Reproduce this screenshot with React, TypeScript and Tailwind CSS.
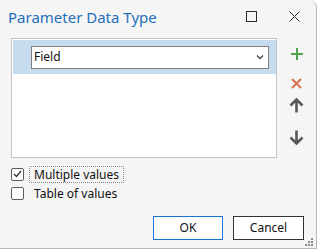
import React from "react";

const font = { fontFamily: '"Segoe UI", "Noto Sans", "Open Sans", sans-serif' };

export default function App() {
  return (
    <div className="w-[318px] h-[251px] bg-white" style={font}>
      <div className="relative w-[317px] h-[249px] bg-[#f4f5f4] border-r border-b border-[#b9b9b9] rounded-tr-[8px] flex flex-col">
        {/* title bar */}
        <div className="h-[34px] flex items-center pl-[8px] pr-[16px]">
          <span className="text-[15px] text-[#1f6fbd] leading-none flex-1">Parameter Data Type</span>
          <div className="flex items-center gap-[32px] -mt-[2px]">
            <svg width="11" height="11" viewBox="0 0 11 11">
              <rect x="0.5" y="0.5" width="10" height="10" fill="none" stroke="#2b2b2b" strokeWidth="1" />
            </svg>
            <svg width="11" height="11" viewBox="0 0 11 11">
              <path d="M0.5 0.5 L10.5 10.5 M10.5 0.5 L0.5 10.5" stroke="#2b2b2b" strokeWidth="1" />
            </svg>
          </div>
        </div>
        {/* body */}
        <div className="flex pl-[11px] pt-[4px]">
          <div className="w-[266px] h-[120px] border border-[#c3c3c3] bg-white pl-[1px] pt-[1px]">
            <div className="h-[34px] bg-[#c6dbee] flex items-center pl-[18px] pr-[7px]">
              <div className="flex-1 h-[23px] border border-[#7f7f7f] bg-white flex items-center pl-[2px] pr-[4px]">
                <span className="text-[12px] text-[#111] flex-1">Field</span>
                <svg width="8" height="6" viewBox="0 0 8 6">
                  <path d="M1 1.5 L4 4.5 L7 1.5" fill="none" stroke="#444" strokeWidth="1.3" />
                </svg>
              </div>
            </div>
          </div>
          <div className="flex-1 flex flex-col items-center pt-[10px]">
            <svg width="12" height="12" viewBox="0 0 12 12">
              <path d="M6 0 V12 M0 6 H12" stroke="#4e9f4e" strokeWidth="2" />
            </svg>
            <svg width="11" height="11" viewBox="0 0 11 11" className="mt-[18px]">
              <path d="M1 1 L10 10 M10 1 L1 10" stroke="#d9704f" strokeWidth="2" />
            </svg>
            <svg width="15" height="16" viewBox="0 0 15 16" className="mt-[8px]">
              <path d="M7.5 15.5 V2.5 M1.5 8.5 L7.5 2.5 L13.5 8.5" fill="none" stroke="#595959" strokeWidth="2.6" />
            </svg>
            <svg width="15" height="16" viewBox="0 0 15 16" className="mt-[17px]">
              <path d="M7.5 0.5 V13.5 M1.5 7.5 L7.5 13.5 L13.5 7.5" fill="none" stroke="#595959" strokeWidth="2.6" />
            </svg>
          </div>
        </div>
        {/* checkboxes */}
        <div className="flex flex-col pl-[11px] pt-[8px] gap-[3px]">
          <div className="flex items-center h-[16px]">
            <div className="w-[13px] h-[13px] border border-[#5c5c5c] rounded-[2px] bg-white flex items-center justify-center">
              <svg width="9" height="8" viewBox="0 0 9 8">
                <path d="M1 4 L3.5 6.5 L8 1" fill="none" stroke="#333" strokeWidth="1.4" />
              </svg>
            </div>
            <span className="ml-[5px] px-[4px] border border-dotted border-[#8a8a8a] text-[12px] text-[#111] leading-[15px]">Multiple values</span>
          </div>
          <div className="flex items-center h-[16px]">
            <div className="w-[13px] h-[13px] border border-[#5c5c5c] rounded-[2px] bg-white" />
            <span className="ml-[10px] text-[12px] text-[#111] leading-[15px]">Table of values</span>
          </div>
        </div>
        {/* buttons */}
        <div className="flex justify-end pr-[12px] pt-[15px] gap-[10px]">
          <button className="w-[70px] h-[24px] border border-[#1a73cf] bg-white text-[12px] text-[#111]">OK</button>
          <button className="w-[71px] h-[24px] border border-[#333] bg-white text-[12px] text-[#111]">Cancel</button>
        </div>
        {/* resize grip */}
        <svg width="10" height="10" viewBox="0 0 10 10" className="absolute right-[2px] bottom-[1px]">
          <g fill="#8a8a8a">
            <rect x="7" y="1" width="2" height="2" />
            <rect x="4" y="4" width="2" height="2" />
            <rect x="7" y="4" width="2" height="2" />
            <rect x="1" y="7" width="2" height="2" />
            <rect x="4" y="7" width="2" height="2" />
            <rect x="7" y="7" width="2" height="2" />
          </g>
        </svg>
      </div>
    </div>
  );
}
